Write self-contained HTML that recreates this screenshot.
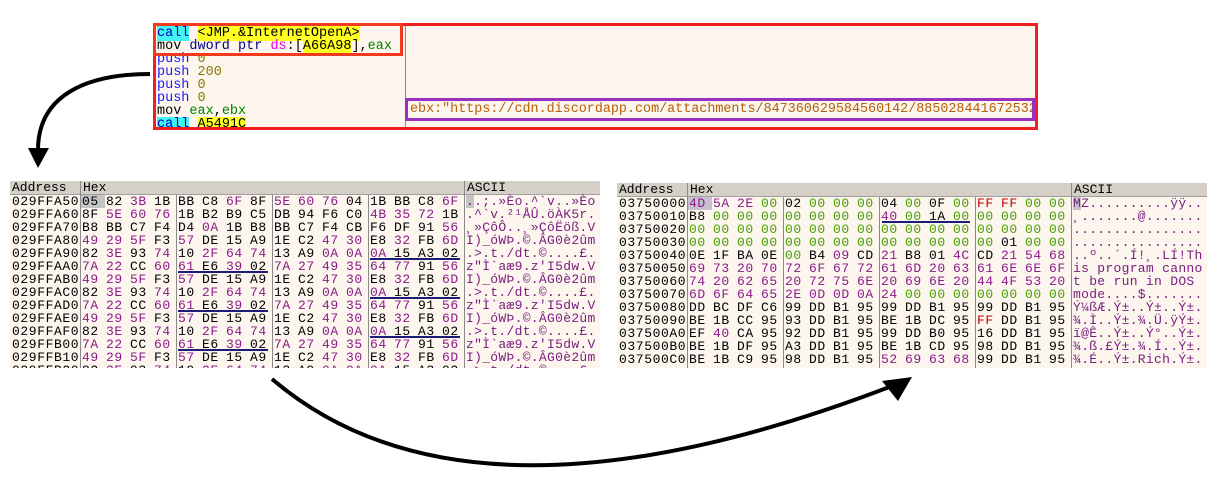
<!DOCTYPE html>
<html><head><meta charset="utf-8"><style>
*{margin:0;padding:0;box-sizing:border-box}
body{width:1217px;height:478px;background:#fff;position:relative;overflow:hidden;font-family:"Liberation Mono","DejaVu Sans Mono",monospace}
.pan{position:absolute;background:#fdf6ee;overflow:hidden}
.hd{position:absolute;left:0;right:0;top:0;height:14px;background:#d4d0c8;font-size:13px;line-height:14px;color:#000;border-bottom:1px solid #a0a0a0}
.hd span{position:absolute;top:0}
.vl{position:absolute;top:0;bottom:0;width:1px;background:#8a8a8a}
.r{position:absolute;left:0;height:13px;font-size:13px;line-height:13px;letter-spacing:0.6px;white-space:pre;color:#000}
.r b{font-weight:normal;display:inline-block;width:70px;padding-left:2px}
.r i{font-style:normal;display:inline-block;width:24px;padding-left:2px}
.r u{text-decoration:none;display:inline-block;padding-left:2px;color:#7a1f80;letter-spacing:0.3px}
.p{color:#8b1a8b}.g{color:#45a000}.x{color:#c00000}
.ul{position:absolute;height:2px;background:#1c1c78}
.dis{position:absolute;font-size:13.5px;line-height:13px;white-space:pre;color:#000}
.c{background:#44f4f4;color:#0000c0}.y{background:#ffff20}
.bl{color:#1a1aff}.ol{color:#8a7a00}.gr{color:#008000}.mg{color:#e000e0}.nv{color:#000080}
</style></head><body>

<div style="position:absolute;left:153px;top:23px;width:885px;height:107px;background:#fdf6ee;border:3px solid #ee2020;overflow:hidden">
 <div style="position:absolute;left:249px;top:0;bottom:0;width:1px;background:#8a8a8a"></div>
 <div class="dis" style="left:1px;top:1px"><span class="c">call</span> <span class="y">&lt;JMP.&amp;InternetOpenA&gt;</span>
mov <span class="nv">dword ptr</span> <span class="mg">ds</span>:[<span class="y">A66A98</span>],<span class="gr">eax</span>
<span class="bl">push</span> <span class="ol">0</span>
<span class="bl">push</span> <span class="ol">200</span>
<span class="bl">push</span> <span class="ol">0</span>
<span class="bl">push</span> <span class="ol">0</span>
mov <span class="gr">eax</span>,<span class="gr">ebx</span>
<span class="c">call</span> <span class="y">A5491C</span></div>
</div>
<div style="position:absolute;left:153px;top:23px;width:250px;height:33px;border:3px solid #f03a20"></div>
<div style="position:absolute;left:405px;top:98px;width:630px;height:23px;border:3px solid #9b30c0;overflow:hidden">
 <div class="dis" style="left:2px;top:2px;color:#b5600a;font-size:13.4px">ebx:"https://cdn.discordapp.com/attachments/847360629584560142/885028441672532</div>
</div>

<div class="pan" style="left:10px;top:181px;width:590px;height:187px">
 <div class="hd"><span style="left:2px">Address</span><span style="left:73px">Hex</span><span style="left:457px">ASCII</span></div>
 <div class="vl" style="left:70px"></div><div class="vl" style="left:166px;top:14px"></div><div class="vl" style="left:262px;top:14px"></div><div class="vl" style="left:358px;top:14px"></div><div class="vl" style="left:454px"></div>
 <div style="position:absolute;left:71px;top:14px;width:24px;height:13px;background:#c4c4c4"></div>
 <div style="position:absolute;left:456px;top:14px;width:8px;height:13px;background:#c4c4c4"></div>
 <div class="r" style="top:14px"><b>029FFA50</b><i>05</i><i>82</i><i class=p>3B</i><i>1B</i><i>BB</i><i>C8</i><i class=p>6F</i><i>8F</i><i class=p>5E</i><i class=p>60</i><i class=p>76</i><i>04</i><i>1B</i><i>BB</i><i>C8</i><i class=p>6F</i><u>..;.»Èo.^`v..»Èo</u></div>
 <div class="r" style="top:27px"><b>029FFA60</b><i>8F</i><i class=p>5E</i><i class=p>60</i><i class=p>76</i><i>1B</i><i>B2</i><i>B9</i><i>C5</i><i>DB</i><i>94</i><i>F6</i><i>C0</i><i class=p>4B</i><i class=p>35</i><i class=p>72</i><i>1B</i><u>.^`v.²¹ÅÛ.öÀK5r.</u></div>
 <div class="r" style="top:40px"><b>029FFA70</b><i>B8</i><i>BB</i><i>C7</i><i>F4</i><i>D4</i><i class=p>0A</i><i>1B</i><i>B8</i><i>BB</i><i>C7</i><i>F4</i><i>CB</i><i>F6</i><i>DF</i><i>91</i><i class=p>56</i><u>¸»ÇôÔ..¸»ÇôËöß.V</u></div>
 <div class="r" style="top:53px"><b>029FFA80</b><i class=p>49</i><i class=p>29</i><i class=p>5F</i><i>F3</i><i class=p>57</i><i>DE</i><i>15</i><i>A9</i><i>1E</i><i>C2</i><i class=p>47</i><i class=p>30</i><i>E8</i><i class=p>32</i><i>FB</i><i class=p>6D</i><u>I)_óWÞ.©.ÂG0è2ûm</u></div>
 <div class="r" style="top:66px"><b>029FFA90</b><i>82</i><i class=p>3E</i><i>93</i><i class=p>74</i><i>10</i><i class=p>2F</i><i class=p>64</i><i class=p>74</i><i>13</i><i>A9</i><i class=p>0A</i><i class=p>0A</i><i class=p>0A</i><i>15</i><i>A3</i><i>02</i><u>.&gt;.t./dt.©....£.</u></div>
 <div class="r" style="top:79px"><b>029FFAA0</b><i class=p>7A</i><i class=p>22</i><i>CC</i><i class=p>60</i><i class=p>61</i><i>E6</i><i class=p>39</i><i>02</i><i class=p>7A</i><i class=p>27</i><i class=p>49</i><i class=p>35</i><i class=p>64</i><i class=p>77</i><i>91</i><i class=p>56</i><u>z"Ì`aæ9.z'I5dw.V</u></div>
 <div class="r" style="top:92px"><b>029FFAB0</b><i class=p>49</i><i class=p>29</i><i class=p>5F</i><i>F3</i><i class=p>57</i><i>DE</i><i>15</i><i>A9</i><i>1E</i><i>C2</i><i class=p>47</i><i class=p>30</i><i>E8</i><i class=p>32</i><i>FB</i><i class=p>6D</i><u>I)_óWÞ.©.ÂG0è2ûm</u></div>
 <div class="r" style="top:105px"><b>029FFAC0</b><i>82</i><i class=p>3E</i><i>93</i><i class=p>74</i><i>10</i><i class=p>2F</i><i class=p>64</i><i class=p>74</i><i>13</i><i>A9</i><i class=p>0A</i><i class=p>0A</i><i class=p>0A</i><i>15</i><i>A3</i><i>02</i><u>.&gt;.t./dt.©....£.</u></div>
 <div class="r" style="top:118px"><b>029FFAD0</b><i class=p>7A</i><i class=p>22</i><i>CC</i><i class=p>60</i><i class=p>61</i><i>E6</i><i class=p>39</i><i>02</i><i class=p>7A</i><i class=p>27</i><i class=p>49</i><i class=p>35</i><i class=p>64</i><i class=p>77</i><i>91</i><i class=p>56</i><u>z"Ì`aæ9.z'I5dw.V</u></div>
 <div class="r" style="top:131px"><b>029FFAE0</b><i class=p>49</i><i class=p>29</i><i class=p>5F</i><i>F3</i><i class=p>57</i><i>DE</i><i>15</i><i>A9</i><i>1E</i><i>C2</i><i class=p>47</i><i class=p>30</i><i>E8</i><i class=p>32</i><i>FB</i><i class=p>6D</i><u>I)_óWÞ.©.ÂG0è2ûm</u></div>
 <div class="r" style="top:144px"><b>029FFAF0</b><i>82</i><i class=p>3E</i><i>93</i><i class=p>74</i><i>10</i><i class=p>2F</i><i class=p>64</i><i class=p>74</i><i>13</i><i>A9</i><i class=p>0A</i><i class=p>0A</i><i class=p>0A</i><i>15</i><i>A3</i><i>02</i><u>.&gt;.t./dt.©....£.</u></div>
 <div class="r" style="top:157px"><b>029FFB00</b><i class=p>7A</i><i class=p>22</i><i>CC</i><i class=p>60</i><i class=p>61</i><i>E6</i><i class=p>39</i><i>02</i><i class=p>7A</i><i class=p>27</i><i class=p>49</i><i class=p>35</i><i class=p>64</i><i class=p>77</i><i>91</i><i class=p>56</i><u>z"Ì`aæ9.z'I5dw.V</u></div>
 <div class="r" style="top:170px"><b>029FFB10</b><i class=p>49</i><i class=p>29</i><i class=p>5F</i><i>F3</i><i class=p>57</i><i>DE</i><i>15</i><i>A9</i><i>1E</i><i>C2</i><i class=p>47</i><i class=p>30</i><i>E8</i><i class=p>32</i><i>FB</i><i class=p>6D</i><u>I)_óWÞ.©.ÂG0è2ûm</u></div>
 <div class="r" style="top:183px"><b>029FFB20</b><i>82</i><i class=p>3E</i><i>93</i><i class=p>74</i><i>10</i><i class=p>2F</i><i class=p>64</i><i class=p>74</i><i>13</i><i>A9</i><i class=p>0A</i><i class=p>0A</i><i class=p>0A</i><i>15</i><i>A3</i><i>02</i><u>.&gt;.t./dt.©....£.</u></div>
 <div class="ul" style="left:168px;top:90px;width:90px"></div>
 <div class="ul" style="left:168px;top:129px;width:90px"></div>
 <div class="ul" style="left:168px;top:168px;width:90px"></div>
 <div class="ul" style="left:360px;top:77px;width:90px"></div>
 <div class="ul" style="left:360px;top:116px;width:90px"></div>
 <div class="ul" style="left:360px;top:155px;width:90px"></div>
</div>

<div class="pan" style="left:617px;top:183px;width:590px;height:185px">
 <div class="hd"><span style="left:2px">Address</span><span style="left:73px">Hex</span><span style="left:457px">ASCII</span></div>
 <div class="vl" style="left:70px"></div><div class="vl" style="left:166px;top:14px"></div><div class="vl" style="left:262px;top:14px"></div><div class="vl" style="left:358px;top:14px"></div><div class="vl" style="left:454px"></div>
 <div style="position:absolute;left:71px;top:14px;width:24px;height:13px;background:#c8c0cc"></div>
 <div style="position:absolute;left:456px;top:14px;width:8px;height:13px;background:#c8c0cc"></div>
 <div class="r" style="top:14px"><b>03750000</b><i class=p>4D</i><i class=p>5A</i><i class=p>2E</i><i class=g>00</i><i>02</i><i class=g>00</i><i class=g>00</i><i class=g>00</i><i>04</i><i class=g>00</i><i>0F</i><i class=g>00</i><i class=x>FF</i><i class=x>FF</i><i class=g>00</i><i class=g>00</i><u>MZ..........ÿÿ..</u></div>
 <div class="r" style="top:27px"><b>03750010</b><i>B8</i><i class=g>00</i><i class=g>00</i><i class=g>00</i><i class=g>00</i><i class=g>00</i><i class=g>00</i><i class=g>00</i><i class=p>40</i><i class=g>00</i><i>1A</i><i class=g>00</i><i class=g>00</i><i class=g>00</i><i class=g>00</i><i class=g>00</i><u>¸.......@.......</u></div>
 <div class="r" style="top:40px"><b>03750020</b><i class=g>00</i><i class=g>00</i><i class=g>00</i><i class=g>00</i><i class=g>00</i><i class=g>00</i><i class=g>00</i><i class=g>00</i><i class=g>00</i><i class=g>00</i><i class=g>00</i><i class=g>00</i><i class=g>00</i><i class=g>00</i><i class=g>00</i><i class=g>00</i><u>................</u></div>
 <div class="r" style="top:53px"><b>03750030</b><i class=g>00</i><i class=g>00</i><i class=g>00</i><i class=g>00</i><i class=g>00</i><i class=g>00</i><i class=g>00</i><i class=g>00</i><i class=g>00</i><i class=g>00</i><i class=g>00</i><i class=g>00</i><i class=g>00</i><i>01</i><i class=g>00</i><i class=g>00</i><u>................</u></div>
 <div class="r" style="top:66px"><b>03750040</b><i>0E</i><i>1F</i><i>BA</i><i>0E</i><i class=g>00</i><i>B4</i><i class=p>09</i><i>CD</i><i class=p>21</i><i>B8</i><i>01</i><i class=p>4C</i><i>CD</i><i class=p>21</i><i class=p>54</i><i class=p>68</i><u>..º..´.Í!¸.LÍ!Th</u></div>
 <div class="r" style="top:79px"><b>03750050</b><i class=p>69</i><i class=p>73</i><i class=p>20</i><i class=p>70</i><i class=p>72</i><i class=p>6F</i><i class=p>67</i><i class=p>72</i><i class=p>61</i><i class=p>6D</i><i class=p>20</i><i class=p>63</i><i class=p>61</i><i class=p>6E</i><i class=p>6E</i><i class=p>6F</i><u>is program canno</u></div>
 <div class="r" style="top:92px"><b>03750060</b><i class=p>74</i><i class=p>20</i><i class=p>62</i><i class=p>65</i><i class=p>20</i><i class=p>72</i><i class=p>75</i><i class=p>6E</i><i class=p>20</i><i class=p>69</i><i class=p>6E</i><i class=p>20</i><i class=p>44</i><i class=p>4F</i><i class=p>53</i><i class=p>20</i><u>t be run in DOS </u></div>
 <div class="r" style="top:105px"><b>03750070</b><i class=p>6D</i><i class=p>6F</i><i class=p>64</i><i class=p>65</i><i class=p>2E</i><i class=p>0D</i><i class=p>0D</i><i class=p>0A</i><i class=p>24</i><i class=g>00</i><i class=g>00</i><i class=g>00</i><i class=g>00</i><i class=g>00</i><i class=g>00</i><i class=g>00</i><u>mode....$.......</u></div>
 <div class="r" style="top:118px"><b>03750080</b><i>DD</i><i>BC</i><i>DF</i><i>C6</i><i>99</i><i>DD</i><i>B1</i><i>95</i><i>99</i><i>DD</i><i>B1</i><i>95</i><i>99</i><i>DD</i><i>B1</i><i>95</i><u>Ý¼ßÆ.Ý±..Ý±..Ý±.</u></div>
 <div class="r" style="top:131px"><b>03750090</b><i>BE</i><i>1B</i><i>CC</i><i>95</i><i>93</i><i>DD</i><i>B1</i><i>95</i><i>BE</i><i>1B</i><i>DC</i><i>95</i><i class=x>FF</i><i>DD</i><i>B1</i><i>95</i><u>¾.Ì..Ý±.¾.Ü.ÿÝ±.</u></div>
 <div class="r" style="top:144px"><b>037500A0</b><i>EF</i><i class=p>40</i><i>CA</i><i>95</i><i>92</i><i>DD</i><i>B1</i><i>95</i><i>99</i><i>DD</i><i>B0</i><i>95</i><i>16</i><i>DD</i><i>B1</i><i>95</i><u>ï@Ê..Ý±..Ý°..Ý±.</u></div>
 <div class="r" style="top:157px"><b>037500B0</b><i>BE</i><i>1B</i><i>DF</i><i>95</i><i>A3</i><i>DD</i><i>B1</i><i>95</i><i>BE</i><i>1B</i><i>CD</i><i>95</i><i>98</i><i>DD</i><i>B1</i><i>95</i><u>¾.ß.£Ý±.¾.Í..Ý±.</u></div>
 <div class="r" style="top:170px"><b>037500C0</b><i>BE</i><i>1B</i><i>C9</i><i>95</i><i>98</i><i>DD</i><i>B1</i><i>95</i><i class=p>52</i><i class=p>69</i><i class=p>63</i><i class=p>68</i><i>99</i><i>DD</i><i>B1</i><i>95</i><u>¾.É..Ý±.Rich.Ý±.</u></div>
 <div class="ul" style="left:265px;top:38px;width:88px"></div>
</div>

<svg style="position:absolute;left:0;top:0" width="1217" height="478">
 <path d="M150 74 C 85 74, 38 96, 38 150" fill="none" stroke="#000" stroke-width="4"/>
 <polygon points="28,148 49,148 38,168" fill="#000"/>
 <path d="M272 379 Q 470 548 892 386" fill="none" stroke="#000" stroke-width="4"/>
 <polygon points="912,377 882,381 898,401" fill="#000"/>
</svg>
</body></html>
